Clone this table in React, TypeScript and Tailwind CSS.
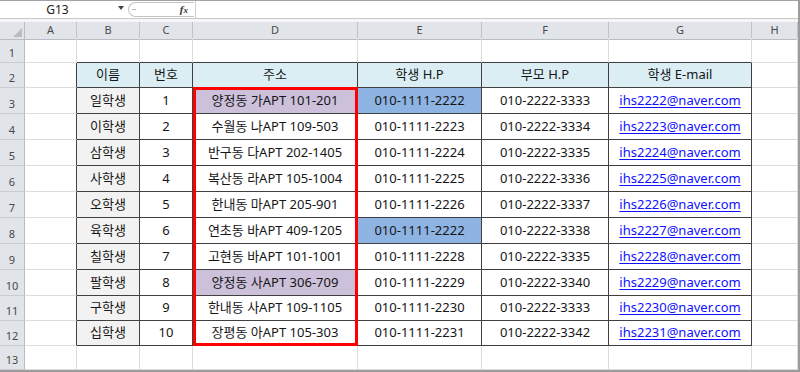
import React from "react";

// 엑셀 시트 캡처 재현 (학생 연락처 표)
const COLS = ["A", "B", "C", "D", "E", "F", "G", "H"];

type Row = { name: string; no: number; addr: string; hp: string; parent: string; mail: string };

const ROWS: Row[] = [
  { name: "일학생", no: 1, addr: "양정동 가APT 101-201", hp: "010-1111-2222", parent: "010-2222-3333", mail: "ihs2222@naver.com" },
  { name: "이학생", no: 2, addr: "수월동 나APT 109-503", hp: "010-1111-2223", parent: "010-2222-3334", mail: "ihs2223@naver.com" },
  { name: "삼학생", no: 3, addr: "반구동 다APT 202-1405", hp: "010-1111-2224", parent: "010-2222-3335", mail: "ihs2224@naver.com" },
  { name: "사학생", no: 4, addr: "복산동 라APT 105-1004", hp: "010-1111-2225", parent: "010-2222-3336", mail: "ihs2225@naver.com" },
  { name: "오학생", no: 5, addr: "한내동 마APT 205-901", hp: "010-1111-2226", parent: "010-2222-3337", mail: "ihs2226@naver.com" },
  { name: "육학생", no: 6, addr: "연초동 바APT 409-1205", hp: "010-1111-2222", parent: "010-2222-3338", mail: "ihs2227@naver.com" },
  { name: "칠학생", no: 7, addr: "고현동 바APT 101-1001", hp: "010-1111-2228", parent: "010-2222-3335", mail: "ihs2228@naver.com" },
  { name: "팔학생", no: 8, addr: "양정동 사APT 306-709", hp: "010-1111-2229", parent: "010-2222-3340", mail: "ihs2229@naver.com" },
  { name: "구학생", no: 9, addr: "한내동 사APT 109-1105", hp: "010-1111-2230", parent: "010-2222-3333", mail: "ihs2230@naver.com" },
  { name: "십학생", no: 10, addr: "장평동 아APT 105-303", hp: "010-1111-2231", parent: "010-2222-3342", mail: "ihs2231@naver.com" },
];

// 강조 셀 (중복 주소 / 중복 번호)
const PURPLE = new Set([0, 7]);
const BLUE = new Set([0, 5]);

const GRID = "grid grid-cols-[25px_52px_63px_53px_165px_124px_127px_143px_46px]";

function RowHead({ n }: { n: number }) {
  return (
    <div className="flex items-end justify-center border-r border-b border-r-[#b9bdc3] border-b-[#c9ccd1] bg-[#e1e4e8] pb-[2px] text-[11px] leading-[15px] text-[#4a4a4a]">
      {n}
    </div>
  );
}

// 표 바깥 빈 셀
function Blank({ darkR, darkB }: { darkR?: boolean; darkB?: boolean }) {
  return (
    <div
      className={`border-r border-b ${darkR ? "border-r-[#404040]" : "border-r-[#dadcdd]"} ${
        darkB ? "border-b-[#404040]" : "border-b-[#dadcdd]"
      }`}
    />
  );
}

function Cell({ children, bg = "bg-white", className = "" }: { children: React.ReactNode; bg?: string; className?: string }) {
  return (
    <div
      className={`flex items-center justify-center border-r border-b border-[#404040] whitespace-nowrap text-[13px] text-[#161616] ${bg} ${className}`}
    >
      {children}
    </div>
  );
}

export default function App() {
  const heights = ["h-[26px]", "h-[26px]", "h-[26px]", "h-[26px]", "h-[26px]", "h-[26px]", "h-[26px]", "h-[26px]", "h-[25px]", "h-[25px]"];

  return (
    <div className="relative h-[372px] w-[800px] overflow-hidden bg-white font-['Noto_Sans','Noto_Sans_CJK_KR',sans-serif]">
      {/* 수식 입력줄 */}
      <div className="flex h-[19px] border-t border-b border-t-[#a3a3a3] border-b-[#c9c9c9] bg-white">
        <div className="flex w-[125px] items-center justify-center text-[12px] text-[#222]">
          <span className="ml-[-10px]">G13</span>
        </div>
        <div className="relative flex w-[70px] items-center">
          <span className="absolute left-[-7px] top-[5px] h-0 w-0 border-x-[3px] border-t-[4px] border-x-transparent border-t-[#444]" />
          <div className="ml-[3px] flex h-[15px] w-[66px] items-center rounded-l-full border border-r-0 border-[#c4c4c4]">
            <span className="ml-[3px] h-[1px] w-[4px] bg-[#b5b5b5]" />
            <span className="ml-auto mr-[6px] font-['Liberation_Serif',serif] text-[11px] font-bold italic text-[#333]">
              f<span className="text-[9px]">x</span>
            </span>
          </div>
        </div>
        <div className="flex-1 border-l border-[#d0d0d0]" />
      </div>
      <div className="h-[3px] bg-[#f6f6f6]" />

      {/* 열 머리글 */}
      <div className={`${GRID} h-[16px]`}>
        <div className="relative border-r border-b border-r-[#b9bdc3] border-b-[#b9bdc3] bg-[#e1e4e8]">
          <svg className="absolute bottom-[2px] right-[2px]" width="9" height="9" viewBox="0 0 9 9">
            <path d="M9 0 L9 9 L0 9 Z" fill="#b9bdc2" />
          </svg>
        </div>
        {COLS.map((c) => (
          <div
            key={c}
            className="flex items-center justify-center border-r border-b border-r-[#bfc3c8] border-b-[#b9bdc3] bg-[#e1e4e8] text-[11px] text-[#4a4a4a]"
          >
            {c}
          </div>
        ))}
      </div>

      {/* 1행 */}
      <div className={`${GRID} h-[25px]`}>
        <RowHead n={1} />
        <Blank />
        <Blank darkB />
        <Blank darkB />
        <Blank darkB />
        <Blank darkB />
        <Blank darkB />
        <Blank darkB />
        <Blank />
      </div>

      {/* 2행 제목 */}
      <div className={`${GRID} h-[25px]`}>
        <RowHead n={2} />
        <Blank darkR />
        {["이름", "번호", "주소", "학생 H.P", "부모 H.P", "학생 E-mail"].map((t) => (
          <Cell key={t} bg="bg-[#daeef3]">
            {t}
          </Cell>
        ))}
        <Blank />
      </div>

      {ROWS.map((r, i) => (
        <div key={r.no} className={`${GRID} ${heights[i]}`}>
          <RowHead n={i + 3} />
          <Blank darkR />
          <Cell bg="bg-[#f2f2f2]">{r.name}</Cell>
          <Cell>{r.no}</Cell>
          <Cell bg={PURPLE.has(i) ? "bg-[#ccc0da]" : "bg-white"}>{r.addr}</Cell>
          <Cell bg={BLUE.has(i) ? "bg-[#8db4e2]" : "bg-white"}>{r.hp}</Cell>
          <Cell>{r.parent}</Cell>
          <Cell>
            <span className="text-[#1010ff] underline decoration-1 underline-offset-2">{r.mail}</span>
          </Cell>
          <Blank />
        </div>
      ))}

      {/* 13행 */}
      <div className={`${GRID} h-[24px]`}>
        <RowHead n={13} />
        <Blank />
        <Blank />
        <Blank />
        <Blank />
        <Blank />
        <Blank />
        <Blank />
        <Blank />
      </div>

      {/* 창 테두리 */}
      <div className="absolute bottom-0 left-0 h-[2px] w-full bg-[#9c9c9c]" />
      <div className="absolute right-0 top-0 h-full w-[2px] bg-[#9c9c9c]" />

      {/* 주소 열 빨간 테두리 */}
      <div className="pointer-events-none absolute left-[193px] top-[87px] h-[259px] w-[165px] border-[3px] border-[#ff0000]" />
    </div>
  );
}
